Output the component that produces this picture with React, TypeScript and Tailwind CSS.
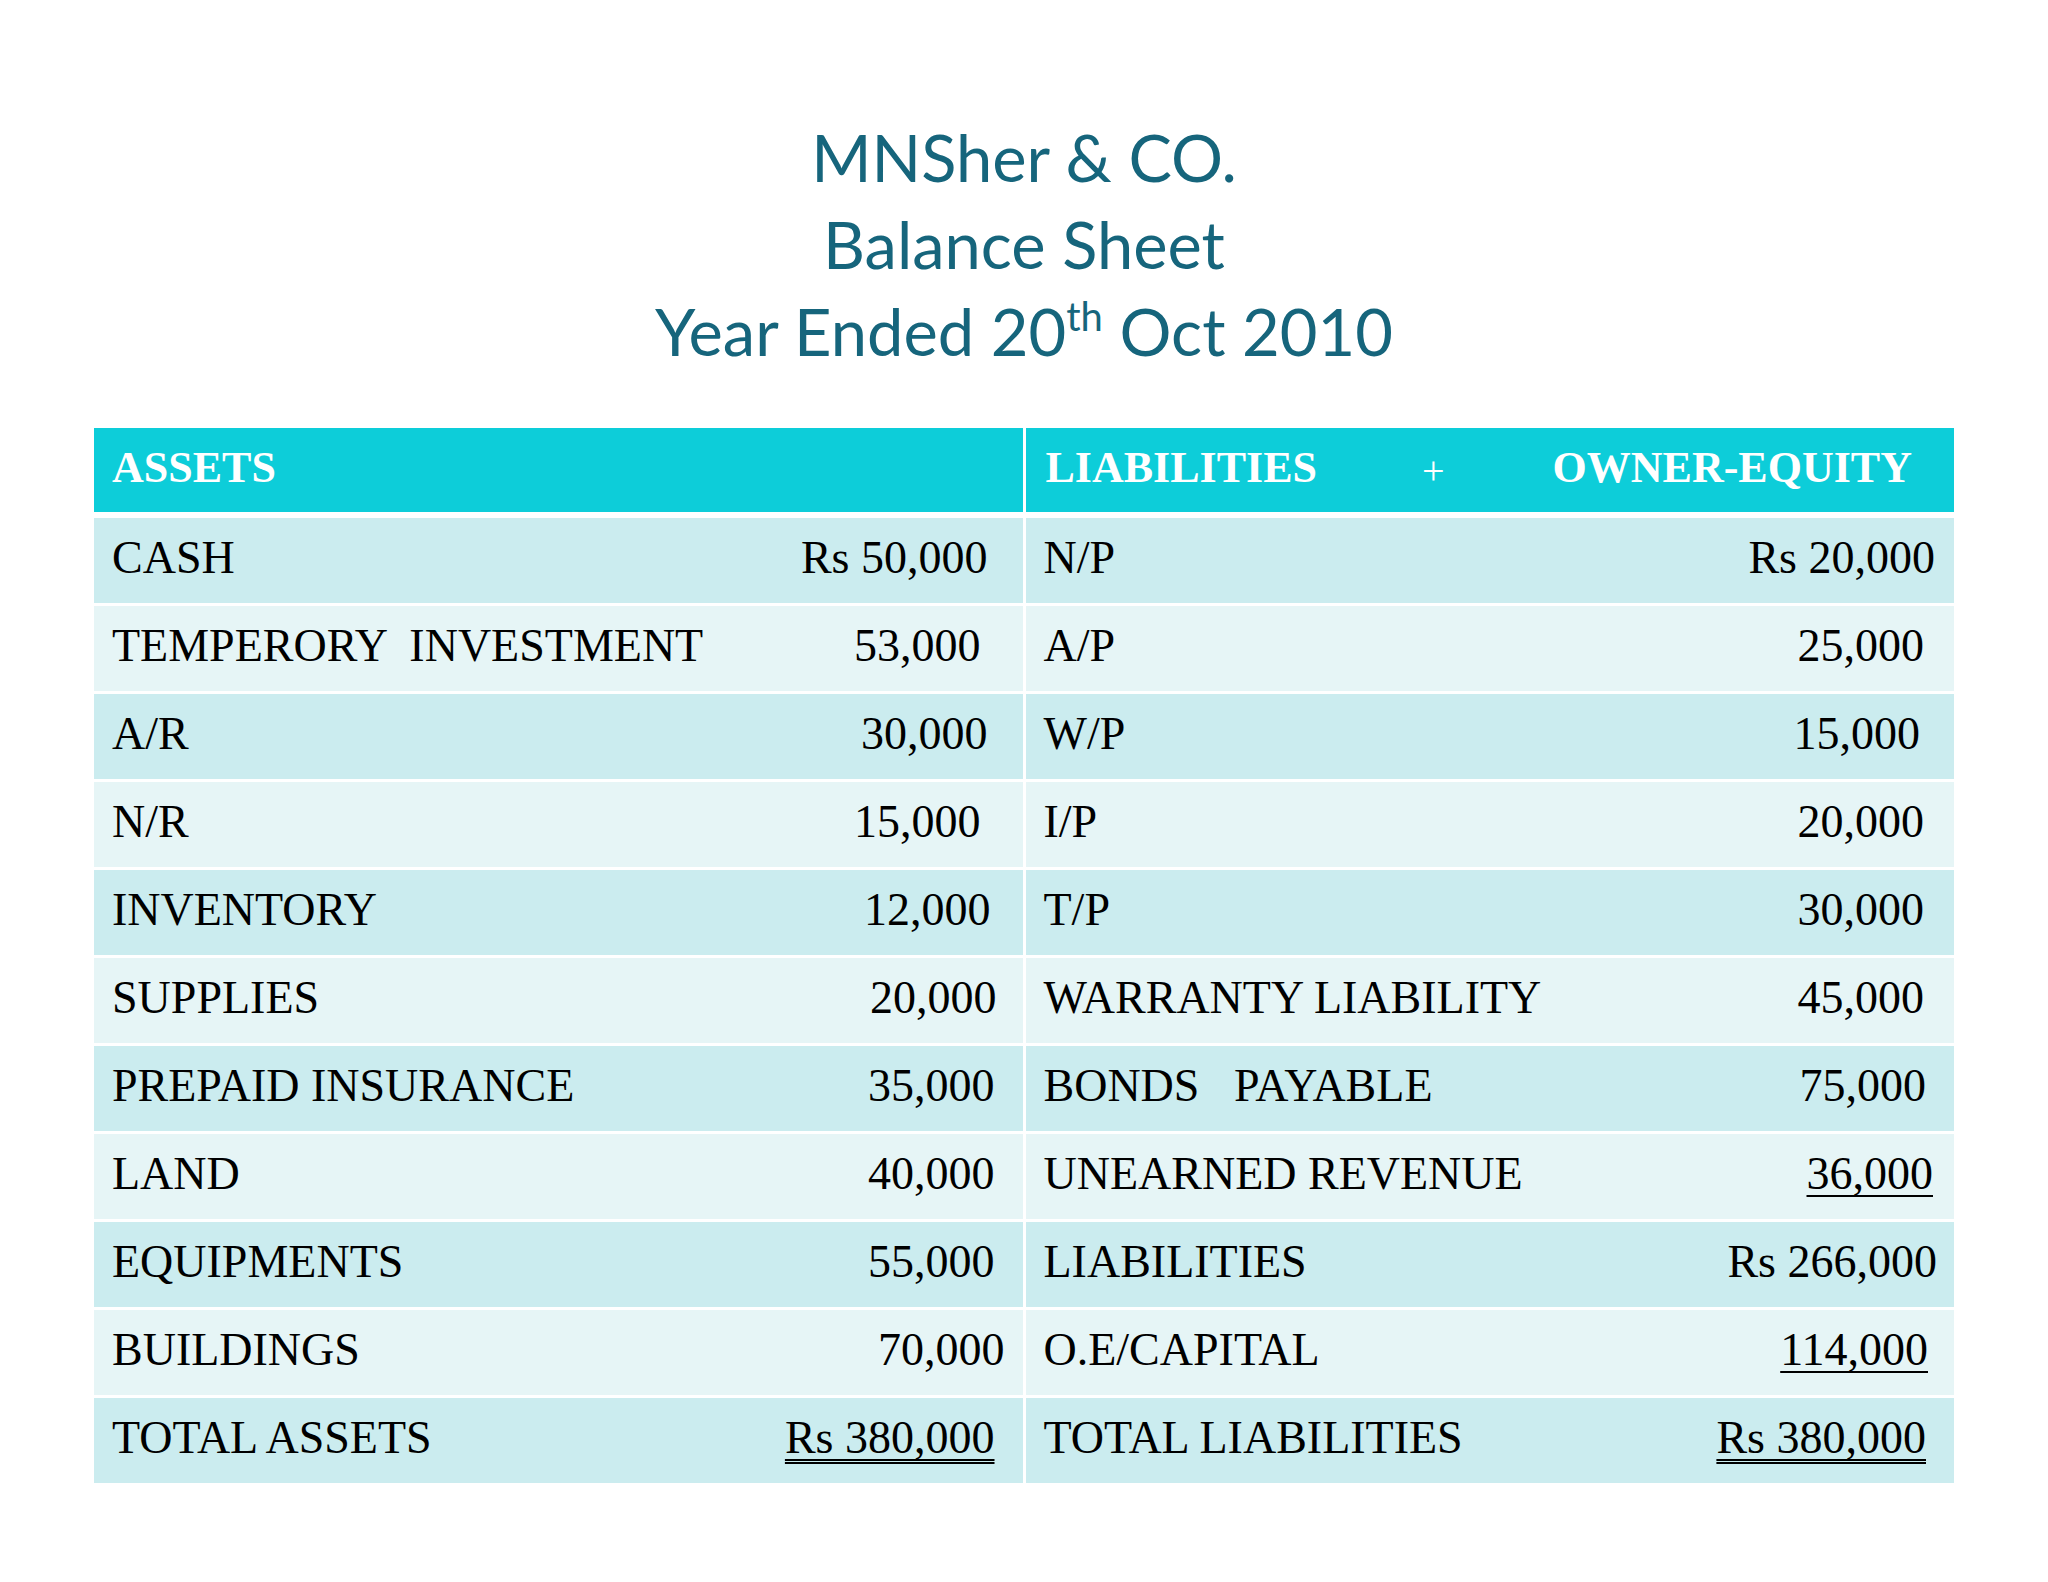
import React from 'react';

interface Row {
  asset: string;
  assetValue: string;
  assetPad: string;
  liability: string;
  liabilityValue: string;
  liabilityPad: string;
  assetLine?: string;
  liabilityLine?: string;
}

const single = 'underline underline-offset-[6px] decoration-[2px] [text-decoration-skip-ink:none]';
const double = 'underline decoration-double decoration-[1.5px] underline-offset-[6px] [text-decoration-skip-ink:none]';

const rows: Row[] = [
  { asset: 'CASH', assetValue: 'Rs 50,000', assetPad: 'pr-[35px]', liability: 'N/P', liabilityValue: 'Rs 20,000', liabilityPad: 'pr-[19px]' },
  { asset: 'TEMPERORY  INVESTMENT', assetValue: '53,000', assetPad: 'pr-[42px]', liability: 'A/P', liabilityValue: '25,000', liabilityPad: 'pr-[30px]' },
  { asset: 'A/R', assetValue: '30,000', assetPad: 'pr-[35px]', liability: 'W/P', liabilityValue: '15,000', liabilityPad: 'pr-[34px]' },
  { asset: 'N/R', assetValue: '15,000', assetPad: 'pr-[42px]', liability: 'I/P', liabilityValue: '20,000', liabilityPad: 'pr-[30px]' },
  { asset: 'INVENTORY', assetValue: '12,000', assetPad: 'pr-[32px]', liability: 'T/P', liabilityValue: '30,000', liabilityPad: 'pr-[30px]' },
  { asset: 'SUPPLIES', assetValue: '20,000', assetPad: 'pr-[26px]', liability: 'WARRANTY LIABILITY', liabilityValue: '45,000', liabilityPad: 'pr-[30px]' },
  { asset: 'PREPAID INSURANCE', assetValue: '35,000', assetPad: 'pr-[28px]', liability: 'BONDS   PAYABLE', liabilityValue: '75,000', liabilityPad: 'pr-[28px]' },
  { asset: 'LAND', assetValue: '40,000', assetPad: 'pr-[28px]', liability: 'UNEARNED REVENUE', liabilityValue: '36,000', liabilityPad: 'pr-[21px]', liabilityLine: single },
  { asset: 'EQUIPMENTS', assetValue: '55,000', assetPad: 'pr-[28px]', liability: 'LIABILITIES', liabilityValue: 'Rs 266,000', liabilityPad: 'pr-[17px]' },
  { asset: 'BUILDINGS', assetValue: '70,000', assetPad: 'pr-[18px]', liability: 'O.E/CAPITAL', liabilityValue: '114,000', liabilityPad: 'pr-[26px]', liabilityLine: single },
  { asset: 'TOTAL ASSETS', assetValue: 'Rs 380,000', assetPad: 'pr-[28px]', liability: 'TOTAL LIABILITIES', liabilityValue: 'Rs 380,000', liabilityPad: 'pr-[28px]', assetLine: double, liabilityLine: double },
];

const serif = "font-['Liberation_Serif','Times_New_Roman',serif]";

export default function App() {
  return (
    <div className="w-[2048px] h-[1582px] bg-white">
      {/* heading */}
      <div className="pt-[114px] flex flex-col items-center text-[#16657c] font-['Lato','Open_Sans',sans-serif] text-[65px] leading-[87px]">
        <div className="h-[87px]">MNSher &amp; CO.</div>
        <div className="h-[87px]">Balance Sheet</div>
        <div className="h-[87px]">
          Year Ended 20<span className="text-[40px] leading-[0] relative -top-[25px]">th</span> Oct 2010
        </div>
      </div>

      {/* table */}
      <div className={`mx-[94px] mt-[53px] ${serif}`}>
        <div className="grid grid-cols-2 gap-x-[3px] h-[84px] bg-white">
          <div className="bg-[#0dcdd9] flex items-center pl-[18px] pb-[4px] text-white font-bold text-[44px]">
            ASSETS
          </div>
          <div className="bg-[#0dcdd9] flex items-center pl-[20px] pb-[4px] text-white font-bold text-[44px]">
            <span>LIABILITIES</span>
            <span className="font-normal text-[40px] pt-[6px] ml-[105px]">+</span>
            <span className="ml-[108px]">OWNER-EQUITY</span>
          </div>
        </div>

        <div className="mt-[6px] flex flex-col gap-y-[3px]">
          {rows.map((row, i) => {
            const bg = i % 2 === 0 ? 'bg-[#cbecef]' : 'bg-[#e6f5f6]';
            return (
              <div key={i} className="grid grid-cols-2 gap-x-[3px] h-[85px] text-[46px] text-black">
                <div className={`${bg} flex items-center justify-between pl-[18px] pb-[6px]`}>
                  <span className="whitespace-pre">{row.asset}</span>
                  <span className={`${row.assetPad} ${row.assetLine ?? ''}`}>{row.assetValue}</span>
                </div>
                <div className={`${bg} flex items-center justify-between pl-[18px] pb-[6px]`}>
                  <span className="whitespace-pre">{row.liability}</span>
                  <span className={`${row.liabilityPad} ${row.liabilityLine ?? ''}`}>{row.liabilityValue}</span>
                </div>
              </div>
            );
          })}
        </div>
      </div>
    </div>
  );
}
